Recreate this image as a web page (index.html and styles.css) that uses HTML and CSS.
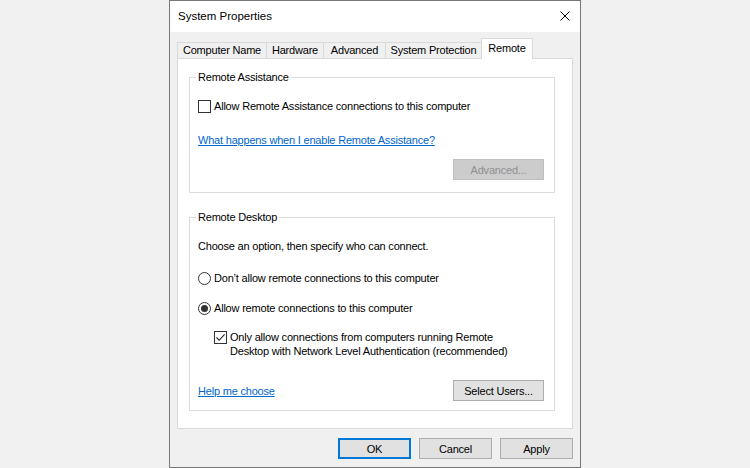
FILE: index.html
```html
<!DOCTYPE html>
<html lang="en">
<head>
  <meta charset="UTF-8" />
  <title>System Properties</title>
  <link rel="stylesheet" href="styles.css">
</head>
<body>
  <div class="window">
    <div class="titlebar">
      <span>System Properties</span>
      <svg class="close" width="10" height="10" viewBox="0 0 10 10">
        <path d="M0.5 0.5 L9.5 9.5 M9.5 0.5 L0.5 9.5" stroke="#000" stroke-width="1" fill="none"/>
      </svg>
    </div>

    <div class="tabs">
      <div class="tab">Computer Name</div>
      <div class="tab">Hardware</div>
      <div class="tab">Advanced</div>
      <div class="tab">System Protection</div>
      <div class="tab active">Remote</div>
    </div>

    <div class="panel">
      <fieldset class="group first">
        <legend>Remote Assistance</legend>
        <div class="option">
          <span class="box"></span>
          <span>Allow Remote Assistance connections to this computer</span>
        </div>
        <div class="link-row"><a href="#">What happens when I enable Remote Assistance?</a></div>
        <div class="button-row">
          <button class="btn wide disabled">Advanced...</button>
        </div>
      </fieldset>

      <fieldset class="group second">
        <legend>Remote Desktop</legend>
        <div class="intro">Choose an option, then specify who can connect.</div>
        <div class="option radio-one">
          <span class="radio"></span>
          <span>Don’t allow remote connections to this computer</span>
        </div>
        <div class="option radio-two">
          <span class="radio checked"></span>
          <span>Allow remote connections to this computer</span>
        </div>
        <div class="option nla">
          <span class="box">
            <svg width="11" height="11" viewBox="0 0 11 11">
              <path d="M1.5 5.5 L4.2 8.3 L9.6 2.3" stroke="#222" stroke-width="1.1" fill="none"/>
            </svg>
          </span>
          <span>Only allow connections from computers running Remote<br>Desktop with Network Level Authentication (recommended)</span>
        </div>
        <div class="bottom-row">
          <a href="#">Help me choose</a>
          <button class="btn wide">Select Users...</button>
        </div>
      </fieldset>
    </div>

    <div class="footer">
      <button class="btn default">OK</button>
      <button class="btn">Cancel</button>
      <button class="btn">Apply</button>
    </div>
  </div>
</body>
</html>
```

FILE: styles.css
```css
body {
  margin: 0;
  background-color: #f1f1f1;
  font-family: 'Liberation Sans', Arial, sans-serif;
  font-size: 11px;
  letter-spacing: -0.2px;
  color: #000;
}

.window {
  width: 410px;
  height: 466px;
  margin: 0 auto;
  border: 1px solid #777;
  background-color: #f0f0f0;
}

.titlebar {
  box-sizing: border-box;
  height: 31px;
  background-color: #fff;
  display: flex;
  align-items: center;
  justify-content: space-between;
  padding: 0 10px 2px 8px;
  font-size: 11.5px;
  letter-spacing: 0;
}

.close {
  display: block;
}

.tabs {
  display: flex;
  align-items: flex-end;
  height: 20px;
  margin-top: 6px;
  padding-left: 7px;
}

.tab {
  box-sizing: border-box;
  height: 16px;
  line-height: 14px;
  text-align: center;
  border: 1px solid #d9d9d9;
  border-bottom: none;
  background-color: #f0f0f0;
  margin-left: -1px;
}

.tab:first-child { margin-left: 0; width: 90px; }
.tab:nth-child(2) { width: 58px; }
.tab:nth-child(3) { width: 63px; }
.tab:nth-child(4) { width: 97px; }

.tab.active {
  position: relative;
  width: 52px;
  height: 21px;
  line-height: 18px;
  margin-bottom: -1px;
  background-color: #fff;
}

.panel {
  box-sizing: border-box;
  height: 371px;
  margin: 0 7px;
  border: 1px solid #d9d9d9;
  background-color: #fff;
  padding: 0 17px 0 11px;
}

.group {
  margin: 10px 0 0;
  padding: 13px 10px 12px 8px;
  border: 1px solid #dcdcdc;
  min-width: 0;
}

.group.second {
  margin-top: 16px;
  padding-top: 13px;
  padding-bottom: 9px;
}

.group legend {
  padding: 0 2px;
  margin-left: -2px;
  line-height: 16px;
}

.option {
  display: flex;
  align-items: center;
  gap: 3px;
  line-height: 16px;
}

.box, .radio {
  box-sizing: border-box;
  width: 13px;
  height: 13px;
  border: 1px solid #333;
  background-color: #fff;
  flex-shrink: 0;
}

.box svg {
  display: block;
}

.radio {
  border-radius: 50%;
  display: flex;
  align-items: center;
  justify-content: center;
}

.radio.checked::after {
  content: '';
  width: 7px;
  height: 7px;
  border-radius: 50%;
  background-color: #333;
}

a {
  color: #0066cc;
  text-decoration: underline;
}

.link-row {
  margin-top: 18px;
  line-height: 16px;
}

.button-row {
  display: flex;
  justify-content: flex-end;
  margin-top: 11px;
}

.btn {
  box-sizing: border-box;
  width: 73px;
  height: 21px;
  padding: 0;
  font-family: inherit;
  font-size: 11px;
  letter-spacing: -0.2px;
  color: #000;
  background-color: #e1e1e1;
  border: 1px solid #adadad;
}

.btn.wide {
  width: 91px;
}

.btn.disabled {
  background-color: #cccccc;
  border-color: #bfbfbf;
  color: #8f8f8f;
}

.btn.default {
  border: 2px solid #0078d7;
}

.intro {
  line-height: 16px;
}

.radio-one {
  margin-top: 16px;
}

.radio-two {
  margin-top: 14px;
}

.nla {
  align-items: flex-start;
  margin-top: 14px;
  margin-left: 16px;
  line-height: 14px;
}

.nla .box {
  margin-top: 1px;
}

.bottom-row {
  display: flex;
  justify-content: space-between;
  align-items: center;
  margin-top: 22px;
}

.footer {
  display: flex;
  justify-content: flex-end;
  gap: 8px;
  margin-top: 9px;
  padding-right: 7px;
}
```
